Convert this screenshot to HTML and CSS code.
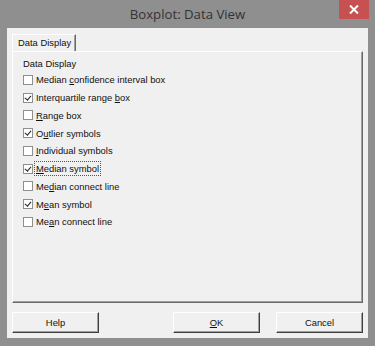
FILE: index.html
```html
<!DOCTYPE html>
<html lang="en">
	<head>
		<meta charset="UTF-8" />
		<title>Boxplot: Data View</title>
		<link rel="stylesheet" href="styles.css">
	</head>
	<body>
		<div class="window">
			<div class="titlebar">
				<span></span>
				<span class="title">Boxplot: Data View</span>
				<button class="close" aria-label="Close">
					<svg width="10" height="9" viewBox="0 0 10 9">
						<path d="M1 0.5 L9 8.5 M9 0.5 L1 8.5" stroke="#fff" stroke-width="2" />
					</svg>
				</button>
			</div>
			<div class="client">
				<div class="tabs">
					<div class="tab active">Data Display</div>
				</div>
				<div class="panel">
					<div class="group-label">Data Display</div>
					<ul class="checks">
						<li><span class="box"></span><span class="lbl">Median <u>c</u>onfidence interval box</span></li>
						<li><span class="box checked"></span><span class="lbl">Interquartile range <u>b</u>ox</span></li>
						<li><span class="box"></span><span class="lbl"><u>R</u>ange box</span></li>
						<li><span class="box checked"></span><span class="lbl">O<u>u</u>tlier symbols</span></li>
						<li><span class="box"></span><span class="lbl"><u>I</u>ndividual symbols</span></li>
						<li><span class="box checked"></span><span class="lbl focus"><u>M</u>edian symbol</span></li>
						<li><span class="box"></span><span class="lbl">Me<u>d</u>ian connect line</span></li>
						<li><span class="box checked"></span><span class="lbl">M<u>e</u>an symbol</span></li>
						<li><span class="box"></span><span class="lbl">Me<u>a</u>n connect line</span></li>
					</ul>
				</div>
				<div class="buttons">
					<button class="btn">Help</button>
					<span class="spacer"></span>
					<button class="btn"><u>O</u>K</button>
					<button class="btn">Cancel</button>
				</div>
			</div>
		</div>
	</body>
</html>
```

FILE: styles.css
```css
body {
	margin: 0;
	background-color: #8f8f8f;
	font-family: "Liberation Sans", Arial, sans-serif;
}
.window {
	width: 375px;
	height: 346px;
	background-color: #8f8f8f;
	box-sizing: border-box;
	display: flex;
	flex-direction: column;
}
.titlebar {
	height: 28px;
	display: grid;
	grid-template-columns: 1fr auto 1fr;
	align-items: start;
}
.title {
	font-family: "Open Sans", "Liberation Sans", sans-serif;
	font-size: 13.2px;
	color: #333;
	line-height: 28px;
}
.close {
	justify-self: end;
	margin-right: 6px;
	width: 30px;
	height: 19px;
	padding: 0;
	border: none;
	background-color: #c75050;
	display: flex;
	align-items: center;
	justify-content: center;
}
.client {
	margin: 0 7px 8px;
	height: 310px;
	background-color: #f0f0f0;
	padding: 6px 5px 0;
	box-sizing: border-box;
	font-size: 9.4px;
	color: #111;
}
.tabs {
	display: flex;
	height: 17px;
}
.tab {
	padding: 0 4px 0 5px;
	line-height: 16px;
	border-top: 1px solid #fff;
	border-left: 1px solid #fff;
	border-right: 1px solid #696969;
	box-shadow: inset -1px 0 0 #a0a0a0;
	background-color: #f0f0f0;
	position: relative;
	z-index: 1;
	height: 17px;
	box-sizing: border-box;
	margin-bottom: -1px;
}
.panel {
	height: 252px;
	width: 351px;
	box-sizing: border-box;
	border-top: 1px solid #fff;
	border-left: 1px solid #fff;
	border-right: 1px solid #696969;
	border-bottom: 1px solid #696969;
	box-shadow: inset -1px -1px 0 #a0a0a0;
	padding: 5px 0 0 10px;
}
.group-label {
	height: 14px;
	line-height: 14px;
}
.checks {
	list-style: none;
	margin: 0;
	padding: 0;
}
.checks li {
	display: flex;
	align-items: center;
	height: 17.75px;
}
.box {
	width: 10px;
	height: 10px;
	border: 1px solid #8e8f8f;
	background-color: #fff;
	box-sizing: border-box;
	margin: 0 1px 0 0;
	position: relative;
}
.box.checked::after {
	content: "";
	position: absolute;
	left: 2px;
	top: 0px;
	width: 2.5px;
	height: 5px;
	border-right: 1.6px solid #222;
	border-bottom: 1.6px solid #222;
	transform: rotate(40deg);
}
.lbl {
	padding: 0 1px;
	line-height: 13px;
	border: 1px dotted transparent;
}
.lbl.focus {
	border-color: #555;
}
.buttons {
	display: flex;
	gap: 16px;
	margin-top: 9px;
}
.spacer {
	flex: 1;
}
.btn {
	width: 87px;
	height: 21px;
	padding: 0;
	font-family: inherit;
	font-size: 9.4px;
	color: #111;
	background-color: #f0f0f0;
	border-top: 1px solid #fff;
	border-left: 1px solid #fff;
	border-right: 1px solid #404040;
	border-bottom: 1px solid #404040;
	box-shadow: inset -1px -1px 0 #a0a0a0;
}
```
